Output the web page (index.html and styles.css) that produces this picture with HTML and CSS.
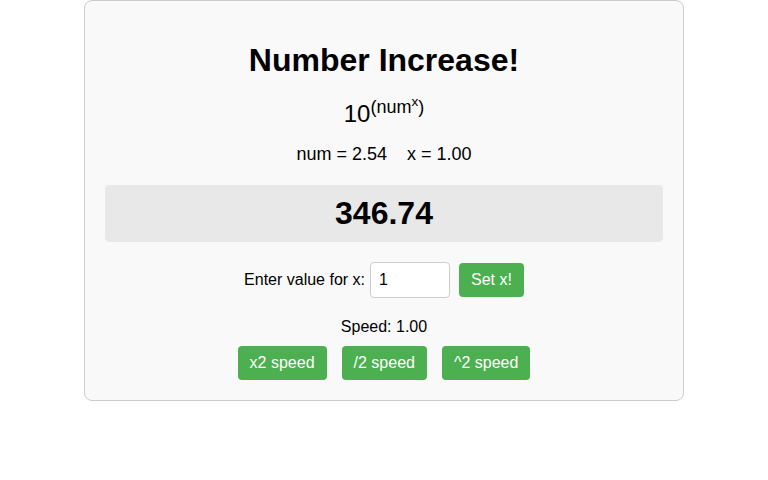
FILE: index.html
```html
<!DOCTYPE html>
<html>
<head>
<meta charset="utf-8">
<link rel="stylesheet" href="styles.css">
</head>
<body>
<div class="card">
  <h1 class="title">Number Increase!</h1>
  <div class="formula">10<sup>(num<sup>x</sup>)</sup></div>
  <div class="vars"><span>num = 2.54</span><span>x = 1.00</span></div>
  <div class="result">346.74</div>
  <div class="input-row">
    <label for="xval">Enter value for x:</label>
    <input id="xval" type="text" value="1">
    <button class="btn">Set x!</button>
  </div>
  <div class="speed">Speed: 1.00</div>
  <div class="speed-row">
    <button class="btn">x2 speed</button>
    <button class="btn">/2 speed</button>
    <button class="btn">^2 speed</button>
  </div>
</div>
</body>
</html>
```
FILE: styles.css
```css
body {
  margin: 0;
  font-family: "Liberation Sans", Arial, sans-serif;
  background: #fff;
  color: #000;
}
.card {
  width: 600px;
  box-sizing: border-box;
  margin: 0 auto;
  padding: 20px;
  border: 1px solid #ccc;
  border-radius: 8px;
  background: #f9f9f9;
  text-align: center;
}
.title {
  font-size: 32px;
  margin: 21px 0 15px;
}
.formula {
  font-size: 24px;
  margin-bottom: 16px;
}
.formula sup {
  font-size: 0.75em;
}
.vars {
  font-size: 18px;
  display: flex;
  justify-content: center;
  gap: 20px;
  margin-bottom: 20px;
}
.result {
  background: #e8e8e8;
  border-radius: 4px;
  font-size: 32px;
  font-weight: bold;
  padding: 10px;
  margin-bottom: 20px;
}
.input-row {
  display: flex;
  justify-content: center;
  align-items: center;
  gap: 5px;
  font-size: 16px;
  margin-bottom: 20px;
}
.input-row input {
  width: 80px;
  height: 36px;
  box-sizing: border-box;
  border: 1px solid #ccc;
  border-radius: 4px;
  padding: 0 8px;
  font-size: 16px;
  font-family: inherit;
  background: #fff;
}
.input-row .btn {
  margin-left: 4px;
}
.btn {
  background: #4caf50;
  color: #fff;
  border: none;
  border-radius: 4px;
  padding: 8px 12px;
  font-size: 16px;
  font-family: inherit;
  cursor: pointer;
}
.speed {
  font-size: 16px;
  margin-bottom: 10px;
}
.speed-row {
  display: flex;
  justify-content: center;
  gap: 15px;
}
```
